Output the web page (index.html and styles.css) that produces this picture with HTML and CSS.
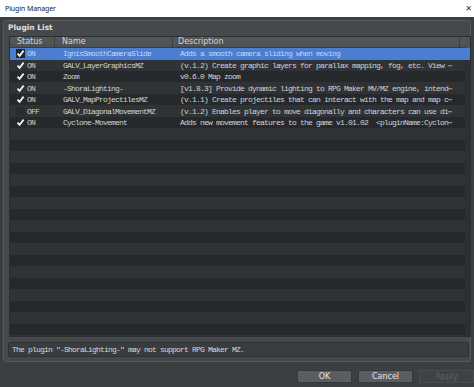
FILE: index.html
```html
<!DOCTYPE html>
<html>
<head>
<meta charset="utf-8">
<link rel="stylesheet" href="styles.css">
</head>
<body>
<div class="titlebar">
  <span class="title">Plugin Manager</span>
  <span class="close">✕</span>
</div>
<div class="window">
  <div class="group">
    <div class="group-title">Plugin List</div>
    <div class="table">
      <div class="thead">
        <div class="th c-status">Status</div>
        <div class="th c-name">Name</div>
        <div class="th c-desc">Description</div>
        <div class="th c-corner"></div>
      </div>
      <div class="tbody">
        <div class="row selected">
          <div class="td c-status"><span class="cb"><svg viewBox="0 0 9 9"><path d="M1.5 4.6 L3.6 6.8 L7.6 1.6" /></svg></span><span class="st">ON</span></div>
          <div class="td c-name">IgnisSmoothCameraSlide</div>
          <div class="td c-desc">Adds a smooth camera sliding when moving</div>
        </div>
        <div class="row">
          <div class="td c-status"><span class="cb"><svg viewBox="0 0 9 9"><path d="M1.5 4.6 L3.6 6.8 L7.6 1.6" /></svg></span><span class="st">ON</span></div>
          <div class="td c-name">GALV_LayerGraphicsMZ</div>
          <div class="td c-desc">(v.1.2) Create graphic layers for parallax mapping, fog, etc. View <span class="ell">⋯</span></div>
        </div>
        <div class="row">
          <div class="td c-status"><span class="cb"><svg viewBox="0 0 9 9"><path d="M1.5 4.6 L3.6 6.8 L7.6 1.6" /></svg></span><span class="st">ON</span></div>
          <div class="td c-name">Zoom</div>
          <div class="td c-desc">v0.6.0 Map zoom</div>
        </div>
        <div class="row">
          <div class="td c-status"><span class="cb"><svg viewBox="0 0 9 9"><path d="M1.5 4.6 L3.6 6.8 L7.6 1.6" /></svg></span><span class="st">ON</span></div>
          <div class="td c-name">-ShoraLighting-</div>
          <div class="td c-desc">[v1.8.3] Provide dynamic lighting to RPG Maker MV/MZ engine, intend<span class="ell">⋯</span></div>
        </div>
        <div class="row">
          <div class="td c-status"><span class="cb"><svg viewBox="0 0 9 9"><path d="M1.5 4.6 L3.6 6.8 L7.6 1.6" /></svg></span><span class="st">ON</span></div>
          <div class="td c-name">GALV_MapProjectilesMZ</div>
          <div class="td c-desc">(v.1.1) Create projectiles that can interact with the map and map c<span class="ell">⋯</span></div>
        </div>
        <div class="row">
          <div class="td c-status"><span class="cb"></span><span class="st">OFF</span></div>
          <div class="td c-name">GALV_DiagonalMovementMZ</div>
          <div class="td c-desc">(v.1.2) Enables player to move diagonally and characters can use di<span class="ell">⋯</span></div>
        </div>
        <div class="row">
          <div class="td c-status"><span class="cb"><svg viewBox="0 0 9 9"><path d="M1.5 4.6 L3.6 6.8 L7.6 1.6" /></svg></span><span class="st">ON</span></div>
          <div class="td c-name">Cyclone-Movement</div>
          <div class="td c-desc">Adds new movement features to the game v1.01.02 &nbsp;&lt;pluginName:Cyclon<span class="ell">⋯</span></div>
        </div>
      </div>
    </div>
    <div class="message">The plugin "-ShoraLighting-" may not support RPG Maker MZ.</div>
  </div>
  <div class="buttons">
    <div class="btn">OK</div>
    <div class="btn">Cancel</div>
    <div class="btn disabled">Apply</div>
  </div>
</div>
</body>
</html>
```
FILE: styles.css
```css
html, body {
  margin: 0;
  padding: 0;
}
body {
  width: 474px;
  height: 387px;
  overflow: hidden;
  background: #3c3f41;
  font-family: "DejaVu Sans", sans-serif;
}
.titlebar {
  height: 17px;
  background: #ffffff;
  display: flex;
  align-items: center;
  justify-content: space-between;
  padding: 0 2px 0 5px;
  box-sizing: border-box;
  color: #222;
}
.title {
  font-family: "Noto Sans", "Open Sans", sans-serif;
  font-size: 7px;
  letter-spacing: -0.1px;
}
.close {
  font-size: 8px;
  color: #333;
  font-family: "DejaVu Sans", sans-serif;
}
.window {
  height: 370px;
  padding: 3px 3px 0 3px;
  box-sizing: border-box;
  display: flex;
  flex-direction: column;
}
.group {
  height: 342px;
  box-sizing: border-box;
  border: 1px solid #575a5d;
  border-radius: 2px;
  background: #46494c;
  padding: 0 0 0 5px;
  display: flex;
  flex-direction: column;
}
.group-title {
  height: 15px;
  line-height: 14px;
  font-weight: bold;
  font-size: 7.5px;
  color: #e2e2e2;
  margin-left: -1px;
}
.table {
  width: 462px;
  height: 301px;
  box-sizing: border-box;
  border: 1px solid #2c2f31;
  background: #25292c;
  display: flex;
  flex-direction: column;
  overflow: hidden;
}
.thead {
  display: flex;
  height: 11px;
  flex: none;
  background: #505356;
}
.th {
  box-sizing: border-box;
  height: 11px;
  line-height: 10px;
  font-size: 8px;
  color: #d4d4d4;
  border-right: 1px solid #3a3d40;
  border-bottom: 1px solid #3a3d40;
  background: linear-gradient(#55585b, #4e5154);
}
.thead .c-status { padding-left: 7px; }
.thead .c-name { padding-left: 7px; }
.thead .c-desc { padding-left: 5px; }
.c-status { width: 45px; flex: none; }
.c-name { width: 118px; flex: none; }
.c-desc { width: 287px; flex: none; }
.c-corner { width: 6px; flex: none; border-right: none; }
.tbody {
  flex: 1;
  background: repeating-linear-gradient(to bottom, #26292c 0, #26292c 11.5px, #2f3336 11.5px, #2f3336 23px);
  border-right: 5px solid #2c3033;
}
.row {
  display: flex;
  height: 11.5px;
  align-items: center;
  font-family: "Liberation Mono", monospace;
  font-size: 8px;
  letter-spacing: -0.8px;
  color: #cfd1d3;
}
.row.selected {
  background: #4b7dd1;
  color: #c4d6f2;
  margin-right: -5px;
}
.td {
  white-space: nowrap;
  overflow: hidden;
  box-sizing: border-box;
}
.ell {
  font-family: "DejaVu Sans Mono", monospace;
  letter-spacing: 0;
  font-size: 7px;
}
.row .c-status {
  display: flex;
  align-items: center;
  padding-left: 6px;
}
.row .c-name { padding-left: 8px; }
.row .c-desc { padding-left: 7px; padding-right: 0; }
.cb {
  width: 9px;
  height: 9px;
  background: #24272a;
  display: inline-flex;
  flex: none;
}
.row:not(.selected) .cb { background: transparent; }
.row:not(.selected) .cb:empty { background: #2a2d30; }
.cb svg {
  width: 9px;
  height: 9px;
}
.cb path {
  fill: none;
  stroke: #f2f2f2;
  stroke-width: 1.8;
}
.st {
  margin-left: 2px;
}
.message {
  margin-top: 5px;
  width: 461px;
  height: 15px;
  box-sizing: border-box;
  margin-left: -1px;
  border: 1px solid #2e3133;
  border-radius: 2px;
  background: #3a3d40;
  font-family: "Liberation Mono", monospace;
  font-size: 8px;
  letter-spacing: -0.8px;
  color: #d6d6d6;
  line-height: 13px;
  padding-left: 3px;
}
.buttons {
  display: flex;
  justify-content: flex-end;
  gap: 6px;
  margin-top: 8px;
  margin-right: -3px;
}
.btn {
  width: 55px;
  height: 13px;
  box-sizing: border-box;
  background: #5b5e61;
  border: 1px solid #36393b;
  font-size: 8px;
  color: #e4e4e4;
  text-align: center;
  line-height: 11px;
}
.btn.disabled {
  background: #3f4245;
  border-color: #4a4d50;
  color: #5e6164;
}
```
